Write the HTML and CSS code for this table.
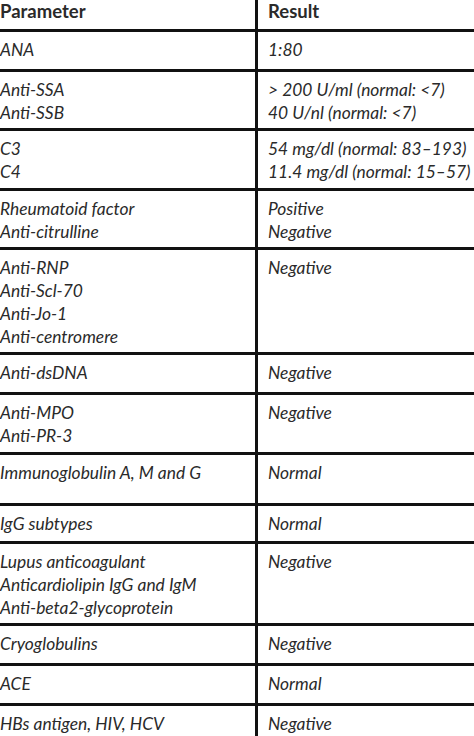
FILE: index.html
```html
<!DOCTYPE html>
<html>
<head>
<meta charset="utf-8">
<link rel="stylesheet" href="styles.css">
</head>
<body>
<div class="table">
  <div class="row head">
    <div class="cell c1">Parameter</div>
    <div class="cell c2">Result</div>
  </div>
  <div class="row r40">
    <div class="cell c1">ANA</div>
    <div class="cell c2">1:80</div>
  </div>
  <div class="row r59">
    <div class="cell c1">Anti-SSA<br>Anti-SSB</div>
    <div class="cell c2">&gt; 200 U/ml (normal: &lt;7)<br>40 U/nl (normal: &lt;7)</div>
  </div>
  <div class="row r60">
    <div class="cell c1">C3<br>C4</div>
    <div class="cell c2">54 mg/dl (normal: 83–193)<br>11.4 mg/dl (normal: 15–57)</div>
  </div>
  <div class="row r59">
    <div class="cell c1">Rheumatoid factor<br>Anti-citrulline</div>
    <div class="cell c2">Positive<br>Negative</div>
  </div>
  <div class="row r105">
    <div class="cell c1">Anti-RNP<br>Anti-Scl-70<br>Anti-Jo-1<br>Anti-centromere</div>
    <div class="cell c2">Negative</div>
  </div>
  <div class="row r40">
    <div class="cell c1">Anti-dsDNA</div>
    <div class="cell c2">Negative</div>
  </div>
  <div class="row r60">
    <div class="cell c1">Anti-MPO<br>Anti-PR-3</div>
    <div class="cell c2">Negative</div>
  </div>
  <div class="row r51">
    <div class="cell c1">Immunoglobulin A, M and G</div>
    <div class="cell c2">Normal</div>
  </div>
  <div class="row r38">
    <div class="cell c1">IgG subtypes</div>
    <div class="cell c2">Normal</div>
  </div>
  <div class="row r82">
    <div class="cell c1">Lupus anticoagulant<br>Anticardiolipin IgG and IgM<br>Anti-beta2-glycoprotein</div>
    <div class="cell c2">Negative</div>
  </div>
  <div class="row r40">
    <div class="cell c1">Cryoglobulins</div>
    <div class="cell c2">Negative</div>
  </div>
  <div class="row r40">
    <div class="cell c1">ACE</div>
    <div class="cell c2">Normal</div>
  </div>
  <div class="row r40">
    <div class="cell c1">HBs antigen, HIV, HCV</div>
    <div class="cell c2">Negative</div>
  </div>
</div>
</body>
</html>
```
FILE: styles.css
```css
html, body {
  margin: 0;
  padding: 0;
  background: #fff;
}
body {
  font-family: Lato, "Open Sans", sans-serif;
  color: #2a2a2a;
  overflow: hidden;
}
.table {
  width: 474px;
}
.row {
  display: grid;
  grid-template-columns: 255px 1fr;
  box-sizing: border-box;
  border-bottom: 3px solid #111;
}
.cell {
  font-style: italic;
  font-size: 17.4px;
  line-height: 23px;
  padding-top: 6px;
  white-space: nowrap;
}
.c1 {
  padding-left: 0;
}
.c2 {
  border-left: 3px solid #111;
  padding-left: 10px;
}
.head {
  height: 32px;
}
.head .cell {
  font-style: normal;
  font-weight: 700;
  font-size: 18.5px;
  line-height: 20px;
  padding-top: 1px;
}
.r38 { height: 38px; }
.r40 { height: 40px; }
.r51 { height: 51px; }
.r59 { height: 59px; }
.r60 { height: 60px; }
.r82 { height: 82px; }
.r105 { height: 105px; }
```
